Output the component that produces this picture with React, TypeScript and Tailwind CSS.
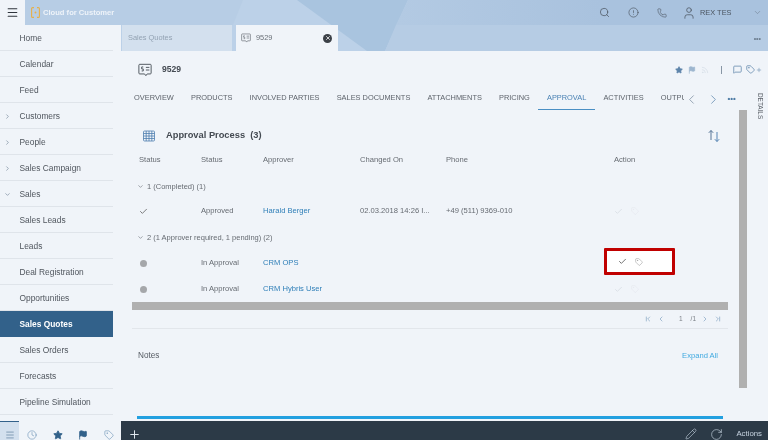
import React from 'react';
import {
  Check, ChevronDown, ChevronFirst, ChevronLast, ChevronLeft, ChevronRight, CircleAlert, Clock, Flag, Menu,
  MessageSquare, Pencil, Phone, Plus, RotateCw, Rss, Search, Star, Tag, User, X,
} from 'lucide-react';

const navItems = [
  { label: 'Home' },
  { label: 'Calendar' },
  { label: 'Feed' },
  { label: 'Customers', arrow: 'right' },
  { label: 'People', arrow: 'right' },
  { label: 'Sales Campaign', arrow: 'right' },
  { label: 'Sales', arrow: 'down' },
  { label: 'Sales Leads' },
  { label: 'Leads' },
  { label: 'Deal Registration' },
  { label: 'Opportunities' },
  { label: 'Sales Quotes', active: true },
  { label: 'Sales Orders' },
  { label: 'Forecasts' },
  { label: 'Pipeline Simulation' },
];

const tabs = ['OVERVIEW', 'PRODUCTS', 'INVOLVED PARTIES', 'SALES DOCUMENTS', 'ATTACHMENTS', 'PRICING', 'APPROVAL', 'ACTIVITIES', 'OUTPUT'];

const QuoteIcon = ({ className }: { className: string }) => (
  <svg viewBox="0 0 16 16" fill="none" stroke="currentColor" strokeWidth="1.1" className={className}>
    <path d="M2 1.5h12a1 1 0 0 1 1 1v9a1 1 0 0 1-1 1h-3.5L9 14.5 7.5 12.5H2a1 1 0 0 1-1-1v-9a1 1 0 0 1 1-1z" />
    <path d="M6 4.5H4.2v2.3H6v2.3H4.2M9 5h4M9 8h4" />
  </svg>
);

const LogoIcon = () => (
  <svg viewBox="0 0 9 11" fill="none" stroke="#e6b04a" strokeWidth="1.1" className="w-[9px] h-[11px] ml-[6px]">
    <path d="M3 .6H1.6a1 1 0 0 0-1 1v7.8a1 1 0 0 0 1 1H3M6 .6h1.4a1 1 0 0 1 1 1v7.8a1 1 0 0 1-1 1H6" />
    <circle cx="4.5" cy="5.5" r="1" fill="#e6b04a" stroke="none" />
  </svg>
);

const GridIcon = () => (
  <svg viewBox="0 0 12 12" fill="none" stroke="#4f7fb0" strokeWidth="0.8" className="w-[12px] h-[12px]">
    <rect x="0.5" y="1" width="11" height="10" rx="1" />
    <path d="M0.5 3.5h11M0.5 6h11M0.5 8.5h11M3.2 1v10M6 1v10M8.8 1v10" />
  </svg>
);

const SortIcon = () => (
  <svg viewBox="0 0 14 14" fill="none" strokeWidth="0.95" className="w-[14px] h-[14px]">
    <path d="M4 11V1.5M1.8 3.8 4 1.5l2.2 2.3" stroke="#4f6f91" />
    <path d="M10 3v9.5M7.8 10.2 10 12.5l2.2-2.3" stroke="#4f7fb0" />
  </svg>
);

// facets of the header background
const HeaderShapes = () => (
  <svg viewBox="0 0 647 51" className="absolute inset-0 w-full h-full">
    <defs>
      <linearGradient id="band" x1="0" x2="1" y1="0" y2="0">
        <stop offset="0" stopColor="#b3cae3" />
        <stop offset="0.55" stopColor="#a9c2de" />
      </linearGradient>
    </defs>
    <polygon points="0,0 122,0 112,25 0,25" fill="#b7cde5" />
    <polygon points="176,0 287,0 264,51 246,51" fill="#a9c4df" />
    <polygon points="287,0 647,0 647,25 275,25" fill="url(#band)" />
    <polygon points="275,25 647,25 647,51 264,51" fill="#b6cce4" />
  </svg>
);

const rowClass = 'grid grid-cols-[62px_62px_97px_86px_168px_1fr] items-center pl-[7px] text-[7.6px] text-[#666b72]';

const ActionIcons = ({ faded }: { faded?: boolean }) => (
  <div className={`flex items-center gap-[8px] ${faded ? 'text-[#d6dbe1]' : 'text-[#444]'}`}>
    <Check size={9} strokeWidth={2} />
    <Tag size={8} strokeWidth={1.4} className={faded ? 'text-[#e2e6eb]' : 'text-[#888]'} />
  </div>
);

export default function App() {
  return (
    <div className="w-[768px] h-[440px] overflow-hidden flex bg-[#f0f4f9] font-['Liberation_Sans',Arial,sans-serif] blur-[0.7px]">
      {/* left column */}
      <div className="w-[121px] shrink-0 flex flex-col">
        <div className="h-[25px] shrink-0 flex items-center bg-[#b7cde5]">
          <div className="w-[25px] h-full flex items-center justify-center bg-[#f0f4f9] text-[#2f353d]">
            <Menu size={13} strokeWidth={1.9} />
          </div>
          <LogoIcon />
          <span className="ml-[3px] text-[7.6px] font-bold text-[#eef3f9] whitespace-nowrap">Cloud for Customer</span>
        </div>
        <div className="w-[113px] flex-1">
          {navItems.map((item) => (
            <div
              key={item.label}
              className={`h-[26px] pt-[1px] flex items-center relative pl-[19.5px] text-[8.4px] border-b ${
                item.active ? 'bg-[#32618a] text-white font-bold border-[#32618a]' : 'text-[#50565e] border-[#dfe4ea]'
              }`}
            >
              {item.arrow === 'right' && <ChevronRight size={7} className="absolute left-[4px] text-[#66798e]" />}
              {item.arrow === 'down' && <ChevronDown size={7} className="absolute left-[4px] text-[#66798e]" />}
              {item.label}
            </div>
          ))}
        </div>
        <div className="h-[19px] shrink-0 flex items-start overflow-hidden text-[#32618a]">
          <div className="w-[19px] h-full pt-[8px] flex justify-center bg-[#d3e0ee] border-t border-[#32618a] text-[#5b7c9c]">
            <Menu size={10} strokeWidth={1.6} />
          </div>
          <div className="w-[26px] pt-[9px] flex justify-center text-[#5b86ad]"><Clock size={10} strokeWidth={1.3} /></div>
          <div className="w-[25px] pt-[9px] flex justify-center"><Star size={10} fill="currentColor" /></div>
          <div className="w-[26px] pt-[9px] flex justify-center"><Flag size={10} fill="currentColor" /></div>
          <div className="w-[25px] pt-[9px] flex justify-center text-[#5b86ad]"><Tag size={10} strokeWidth={1.3} /></div>
        </div>
      </div>

      {/* right column */}
      <div className="flex-1 min-w-0 flex flex-col">
        <div className="h-[51px] shrink-0 relative bg-[#bcd1e8] flex flex-col">
          <HeaderShapes />
          <div className="h-[25px] relative flex items-center text-[#4b5560]">
            <Search size={11} strokeWidth={1.6} className="absolute left-[478px]" />
            <CircleAlert size={11} strokeWidth={1.4} className="absolute left-[507px]" />
            <Phone size={10} strokeWidth={1.4} className="absolute left-[536px]" />
            <User size={14} strokeWidth={1.3} className="absolute left-[561px]" />
            <span className="absolute left-[579px] text-[7.4px] whitespace-nowrap">REX TES</span>
            <ChevronDown size={9} strokeWidth={1.4} className="absolute left-[632px] text-[#6b7a8a]" />
          </div>
          <div className="h-[26px] relative flex items-end pl-px gap-[4px]">
            <div className="w-[110px] h-full flex items-center pl-[6px] bg-[#d3e0ee] text-[7.4px] text-[#93a2b3]">Sales Quotes</div>
            <div className="w-[102px] h-full flex items-center pl-[5px] bg-[#f0f4f9] text-[7.4px] text-[#6a7078]">
              <QuoteIcon className="w-[10px] h-[10px] text-[#6a7078]" />
              <span className="ml-[5px] flex-1">9529</span>
              <span className="w-[9px] h-[9px] mr-[6px] rounded-full bg-[#3b4047] flex items-center justify-center text-white">
                <X size={6} strokeWidth={3} />
              </span>
            </div>
            <div className="absolute right-[7px] top-[11px] text-[#6e7f90] text-[7px] leading-[6px] font-bold">•••</div>
          </div>
        </div>

        {/* object header */}
        <div className="h-[37px] shrink-0 flex items-center pl-[17px] pr-[6px]">
          <QuoteIcon className="w-[14px] h-[14px] text-[#4f565e]" />
          <span className="ml-[10px] text-[8.6px] font-bold text-[#444a52]">9529</span>
          <div className="ml-auto flex items-center text-[#5d84aa]">
            <Star size={8} fill="currentColor" />
            <Flag size={8} fill="#9db6cf" className="ml-[5px] text-[#9db6cf]" />
            <Rss size={8} className="ml-[5px] text-[#d3dce6]" />
            <span className="ml-[12px] w-px h-[8px] bg-[#8896a5]" />
            <MessageSquare size={9} className="ml-[11px]" />
            <Tag size={9} className="ml-[4px]" />
            <Plus size={6} className="ml-[1px]" />
          </div>
        </div>

        {/* tabs */}
        <div className="h-[22px] shrink-0 flex items-center">
          <div className="ml-[4.5px] w-[558px] h-full overflow-hidden flex">
            {tabs.map((tab) => (
              <div
                key={tab}
                className={`h-full shrink-0 px-[8.55px] pb-[2px] flex items-center whitespace-nowrap text-[7.42px] border-b-[1.5px] ${
                  tab === 'APPROVAL' ? 'text-[#4a82b4] border-[#4a8fc4]' : 'text-[#5d636b] border-transparent'
                }`}
              >
                {tab}
              </div>
            ))}
          </div>
          <ChevronLeft size={15} strokeWidth={1.1} className="text-[#6f8296]" />
          <ChevronRight size={15} strokeWidth={1.1} className="ml-[7px] text-[#4d7ba5]" />
          <span className="ml-[7px] text-[8px] font-bold text-[#4d7ba5] leading-none">•••</span>
          <span className="ml-[19px] mt-[15px] text-[6.4px] text-[#5a6068] [writing-mode:vertical-rl] whitespace-nowrap">DETAILS</span>
        </div>

        {/* body */}
        <div className="flex-1 min-h-0 flex">
          <div className="w-[607px] shrink-0 pl-[11px] flex flex-col">
            <div className="h-[49px] shrink-0 flex items-center pl-[11px] pr-[7px] pt-[2px]">
              <GridIcon />
              <span className="ml-[11px] text-[9.3px] font-bold text-[#444a52]">Approval Process&nbsp; (3)</span>
              <div className="ml-auto"><SortIcon /></div>
            </div>
            <div className={`h-[16px] -mt-[7px] ${rowClass} text-[#7b8087]`}>
              <span>Status</span><span>Status</span><span>Approver</span><span>Changed On</span><span>Phone</span><span>Action</span>
            </div>
            <div className="h-[19px] mt-[9px] flex items-center pl-[5px] text-[7.5px] text-[#666b72]">
              <ChevronDown size={7} className="mr-[3px]" />1 (Completed) (1)
            </div>
            <div className={`h-[26px] mt-[2px] ${rowClass}`}>
              <Check size={9} strokeWidth={2} className="text-[#555]" />
              <span>Approved</span>
              <span className="text-[#2f7fb8]">Harald Berger</span>
              <span className="whitespace-nowrap">02.03.2018 14:26 I...</span>
              <span>+49 (511) 9369-010</span>
              <ActionIcons faded />
            </div>
            <div className="h-[22px] mt-[2.5px] flex items-center pl-[5px] text-[7.5px] text-[#666b72]">
              <ChevronDown size={7} className="mr-[3px]" />2 (1 Approver required, 1 pending) (2)
            </div>
            <div className={`h-[26px] mt-[1.5px] relative ${rowClass}`}>
              <span className="w-[7px] h-[7px] ml-[1px] rounded-full bg-[#a5a7aa]" />
              <span>In Approval</span>
              <span className="text-[#2f7fb8]">CRM OPS</span>
              <span /><span />
              <div className="absolute left-[472px] top-[-2px] w-[71px] h-[27px] border-[3px] border-[#c00000] rounded-[1px] bg-white flex items-center pl-[11px]">
                <ActionIcons />
              </div>
            </div>
            <div className={`h-[26px] ${rowClass}`}>
              <span className="w-[7px] h-[7px] ml-[1px] rounded-full bg-[#a5a7aa]" />
              <span>In Approval</span>
              <span className="text-[#2f7fb8]">CRM Hybris User</span>
              <span /><span />
              <ActionIcons faded />
            </div>
            <div className="h-[8px] shrink-0 bg-[#b0b0b0]" />
            <div className="h-[19px] shrink-0 border-b border-[#e2e6eb] flex items-center justify-end gap-[5px] pr-[6px] text-[#7fa0c0] text-[6.5px]">
              <ChevronFirst size={8} />
              <ChevronLeft size={8} />
              <span className="ml-[9px] text-[#7b8087]">1</span>
              <span className="ml-[3px] text-[#7b8087]">/1</span>
              <ChevronRight size={8} />
              <ChevronLast size={8} />
            </div>
            <div className="h-[54px] shrink-0 flex items-center justify-between pl-[6px] pr-[10px]">
              <span className="text-[8.2px] text-[#555b63]">Notes</span>
              <span className="text-[7.6px] text-[#3fa9e0] mb-[1px]">Expand All</span>
            </div>
          </div>
          <div className="ml-[11px] w-[8px] h-[278px] bg-[#b0b0b0]" />
        </div>

        <div className="h-[3px] ml-[16px] w-[586px] shrink-0 bg-[#22a0e0]" />
        <div className="h-[2px] shrink-0" />
        <div className="h-[19px] shrink-0 overflow-hidden bg-[#2c3a47] flex items-center pt-[7px] pl-[7px] pr-[6px] text-[#c6d3e0]">
          <Plus size={13} strokeWidth={1.8} className="text-[#e4ebf2]" />
          <Pencil size={12} strokeWidth={1.2} className="ml-auto" />
          <RotateCw size={13} strokeWidth={1.2} className="ml-[13px]" />
          <span className="ml-[13px] text-[7.8px]">Actions</span>
        </div>
      </div>
    </div>
  );
}
